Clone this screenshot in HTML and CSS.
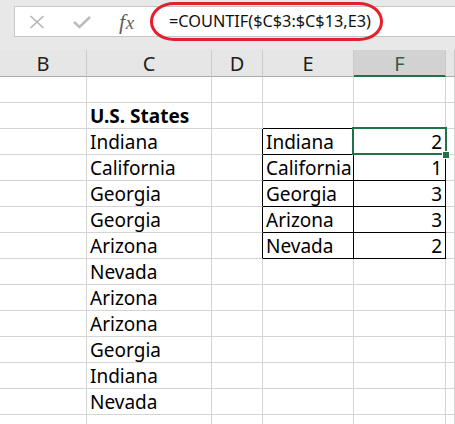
FILE: index.html
```html
<!DOCTYPE html>
<html>
<head>
<meta charset="utf-8">
<link rel="stylesheet" href="styles.css">
</head>
<body>
<div class="toolbar">
  <div class="fbox">
    <div class="icons">
      <svg class="ic-x" width="16" height="14" viewBox="0 0 16 14"><path d="M1.5 1 L14.5 13 M14.5 1 L1.5 13" stroke="#b4b4b4" stroke-width="1.6" fill="none"/></svg>
      <svg class="ic-ok" width="18" height="14" viewBox="0 0 18 14"><path d="M1 7 L6.5 12 L17 2" stroke="#bcbcbc" stroke-width="2.6" fill="none"/></svg>
      <span class="fx"><span class="fx-f">f</span>x</span>
    </div>
    <div class="formula">=COUNTIF($C$3:$C$13,E3)</div>
  </div>
  <div class="mark"></div>
</div>
<div class="grid">
  <div class="hd">B</div><div class="hd">C</div><div class="hd">D</div><div class="hd">E</div><div class="hd hd-on">F</div><div class="hd"></div>

  <div class="c"></div><div class="c"></div><div class="c"></div><div class="c"></div><div class="c"></div><div class="c"></div>

  <div class="c"></div><div class="c b">U.S. States</div><div class="c"></div><div class="c tb-top"></div><div class="c tb-top"></div><div class="c"></div>

  <div class="c"></div><div class="c">Indiana</div><div class="c tb-left"></div><div class="c tb">Indiana</div><div class="c tb num sel">2<span class="handle"></span></div><div class="c"></div>

  <div class="c"></div><div class="c">California</div><div class="c tb-left"></div><div class="c tb">California</div><div class="c tb num">1</div><div class="c"></div>

  <div class="c"></div><div class="c">Georgia</div><div class="c tb-left"></div><div class="c tb">Georgia</div><div class="c tb num">3</div><div class="c"></div>

  <div class="c"></div><div class="c">Georgia</div><div class="c tb-left"></div><div class="c tb">Arizona</div><div class="c tb num">3</div><div class="c"></div>

  <div class="c"></div><div class="c">Arizona</div><div class="c tb-left"></div><div class="c tb">Nevada</div><div class="c tb num">2</div><div class="c"></div>

  <div class="c"></div><div class="c">Nevada</div><div class="c"></div><div class="c"></div><div class="c"></div><div class="c"></div>

  <div class="c"></div><div class="c">Arizona</div><div class="c"></div><div class="c"></div><div class="c"></div><div class="c"></div>

  <div class="c"></div><div class="c">Arizona</div><div class="c"></div><div class="c"></div><div class="c"></div><div class="c"></div>

  <div class="c"></div><div class="c">Georgia</div><div class="c"></div><div class="c"></div><div class="c"></div><div class="c"></div>

  <div class="c"></div><div class="c">Indiana</div><div class="c"></div><div class="c"></div><div class="c"></div><div class="c"></div>

  <div class="c"></div><div class="c">Nevada</div><div class="c"></div><div class="c"></div><div class="c"></div><div class="c"></div>

  <div class="c"></div><div class="c"></div><div class="c"></div><div class="c"></div><div class="c"></div><div class="c"></div>
</div>
</body>
</html>
```

FILE: styles.css
```css
html, body {
  margin: 0;
  padding: 0;
  width: 455px;
  height: 424px;
  overflow: hidden;
  background: #ffffff;
  font-family: "Noto Sans", "Open Sans", sans-serif;
}

.toolbar {
  position: relative;
  height: 50px;
  background: #e8e8e8;
  padding-top: 6px;
  box-sizing: border-box;
}

.fbox {
  margin-left: 14px;
  height: 31px;
  box-sizing: border-box;
  background: #ffffff;
  border: 1px solid #c6c6c6;
  border-right: none;
  display: flex;
  align-items: center;
}

.icons {
  display: flex;
  align-items: center;
  width: 154px;
  padding-left: 14px;
  box-sizing: border-box;
}

.ic-ok { margin-left: 28px; margin-top: 1px; }

.fx {
  margin-left: 28px;
  font-family: "Liberation Serif", "DejaVu Serif", serif;
  font-style: italic;
  font-size: 19px;
  color: #5e5e5e;
  line-height: 29px;
  letter-spacing: 0.5px;
}
.fx-f { font-size: 22px; }

.formula {
  font-size: 16.3px;
  line-height: 29px;
  color: #111;
  white-space: nowrap;
}

.mark {
  position: absolute;
  left: 150px;
  top: 2px;
  width: 233px;
  height: 39px;
  box-sizing: border-box;
  border: 3px solid #e3202b;
  border-radius: 24px / 19px;
}

.grid {
  display: grid;
  grid-template-columns: 87px 125px 51px 91px 92px 1fr;
  grid-template-rows: 27px;
  grid-auto-rows: 26px;
}

.hd {
  box-sizing: border-box;
  background: #e6e6e6;
  border-right: 1px solid #cacaca;
  border-bottom: 1px solid #ababab;
  text-align: center;
  font-size: 20px;
  line-height: 25px;
  padding-top: 1px;
  color: #1e1e1e;
}
.hd-on {
  background: #d2d2d2;
  border-bottom: 2px solid #217346;
  color: #3b5a46;
}

.c {
  position: relative;
  box-sizing: border-box;
  border-right: 1px solid #d4d4d4;
  border-bottom: 1px solid #d4d4d4;
  font-size: 19px;
  line-height: 24px;
  padding: 1px 3px 0;
  color: #000;
  white-space: nowrap;
}
.b { font-weight: bold; }
.num { text-align: right; }

.tb {
  border-right-color: #000;
  border-bottom-color: #000;
}
.tb-top { border-bottom-color: #000; }
.tb-left { border-right-color: #000; }

.sel::after {
  content: "";
  position: absolute;
  left: -2px;
  top: -2px;
  width: 95px;
  height: 28px;
  box-sizing: border-box;
  border: 2px solid #217346;
}
.handle {
  position: absolute;
  left: 88px;
  top: 22px;
  width: 6px;
  height: 6px;
  background: #217346;
  border: 1px solid #ffffff;
  z-index: 2;
}
```
